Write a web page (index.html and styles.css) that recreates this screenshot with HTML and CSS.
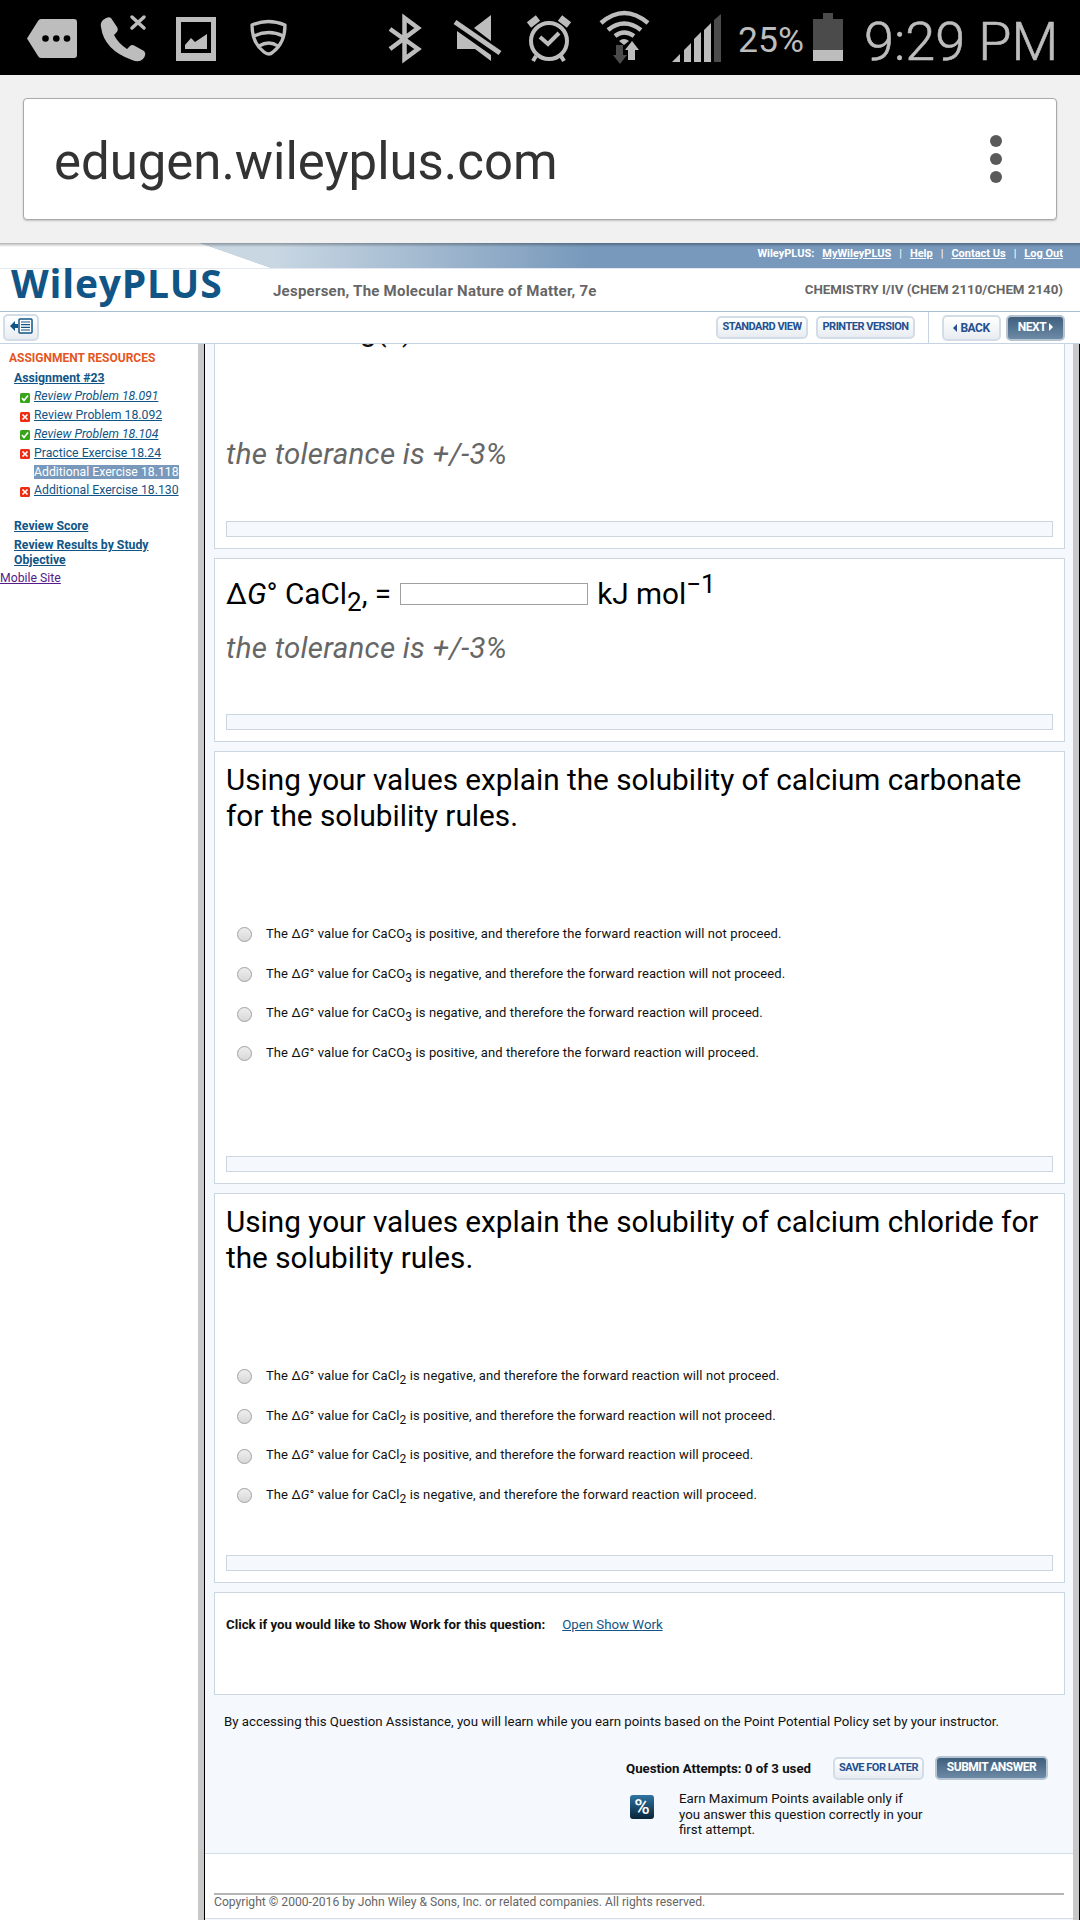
FILE: index.html
```html
<!DOCTYPE html>
<html lang="en">
<head>
    <meta charset="UTF-8">
    <meta name="viewport" content="width=device-width, initial-scale=1.0">
    <title>WileyPLUS</title>
    <link rel="stylesheet" href="styles.css">
</head>
<body>
    <div class="status-bar">
        <svg width="90" height="75" viewBox="0 0 90 75"><path d="M41 19H74q3 0 3 3V55q0 3-3 3H41q-2 0-3-2L27 38.500 38 21q1-2 3-2z"/><g fill="#000"><circle cx="45.500" cy="38.500" r="3.300"/><circle cx="56.300" cy="38.500" r="3.300"/><circle cx="67" cy="38.500" r="3.300"/></g></svg>
        <svg width="70" height="75" viewBox="90 0 70 75"><path d="M103 20q5-4 8-2l6 9q2 3-1 6l-2 2q4 8 13 14l3-3q2-2 5 0l9 5q3 3-1 8-4 4-11 1Q104 50 101 27q-1-4 2-7z"/><path class="line" d="M132 17l12 11M144 17l-12 11" stroke-width="3.500" stroke-linecap="round"/></svg>
        <svg width="72" height="75" viewBox="160 0 72 75"><path fill-rule="evenodd" d="M176 17h40v44h-40zM181 22v31h30v-31z"/><path d="M185 49v-4l6-7 4 4 12-8v15z"/></svg>
        <svg width="88" height="75" viewBox="232 0 88 75"><path class="line" stroke-width="3.300" stroke-linejoin="round" d="M252 25q16-7 33 0 0 18-12 27-4 4-9 0-12-9-12-27zM254 36q15-7 29 0M259 46q10-6 19 0"/></svg>
        <svg class="push" width="120" height="75" viewBox="320 0 120 75"><path class="line" stroke-width="4.500" d="M390 29l28 20-13.500 10V18L418 28 390 49"/></svg>
        <svg width="75" height="75" viewBox="440 0 75 75"><path d="M491 15v26l-17-13zM457 31l34 24v6l-16-12h-18z"/><path class="line" stroke-width="5" d="M455 22l45 31"/></svg>
        <svg width="75" height="75" viewBox="515 0 75 75"><circle class="line" stroke-width="4" cx="549" cy="41" r="18"/><path class="line" stroke-width="4" d="M540 37l8 7 11-11M536 56l-3 5M561 56l3 5"/><path class="line" stroke-width="7" d="M529 25l9-7M560 18l9 7"/></svg>
        <svg width="75" height="75" viewBox="590 0 75 75"><path class="line" stroke-width="4.500" d="M601 23q23-20 47 0M608 30q16-13 33 0M615 36q9-7 19 0"/><path d="M619 41q5-4 10 0l-5 4z"/><path class="dim" d="M616 45h7v10h4l-7 9-7-9h3z"/><path d="M628 60V50h-3l7-9 7 9h-4v10z"/></svg>
        <svg width="73" height="75" viewBox="665 0 73 75"><path d="M672 62l8-8v8zM684 62V50l7-7v19zM694 62V39l7-7v30zM704 62V30l7-7v39z"/><path class="dim" d="M714 62V20l7-6v48z"/></svg>
        <span class="battery-text">25%</span>
        <svg width="36" height="75" viewBox="810 0 36 75"><path class="dim" d="M823 13h10v6h10v31h-30V19h10z"/><path d="M813 50h30v11h-30z"/></svg>
        <span class="clock">9:29 PM</span>
    </div>

    <div class="browser-bar">
        <div class="url-box">
            <span class="url">edugen.wileyplus.com</span>
            <span class="menu-dots"><i></i><i></i><i></i></span>
        </div>
    </div>

    <header class="header">
        <div class="nav-strip">
            <nav class="top-nav">
                <span class="nav-label">WileyPLUS:</span>
                <a href="#">MyWileyPLUS</a><b>|</b><a href="#">Help</a><b>|</b><a href="#">Contact Us</a><b>|</b><a href="#">Log Out</a>
            </nav>
        </div>
        <div class="brand-row">
            <div class="logo">WileyPLUS</div>
            <div class="book-title">Jespersen, The Molecular Nature of Matter, 7e</div>
            <div class="course-title">CHEMISTRY I/IV (CHEM 2110/CHEM 2140)</div>
        </div>
    </header>

    <div class="toolbar">
        <button class="btn toggle">
            <svg width="23" height="16" viewBox="0 0 23 16"><path d="M0 8l5-5v3h3v4H5v3z" fill="#115586"/><rect x="9" y="1" width="13" height="14" rx="1" fill="#fff" stroke="#115586" stroke-width="1.500"/><path d="M11 4h9M11 6.700h9M11 9.300h9M11 12h9" stroke="#115586" stroke-width="1.200"/></svg>
        </button>
        <button class="btn standard">STANDARD VIEW</button>
        <button class="btn printer">PRINTER VERSION</button>
        <div class="page-buttons">
            <button class="btn back"><i class="arrow left"></i>BACK</button>
            <button class="btn dark next">NEXT<i class="arrow right"></i></button>
        </div>
    </div>

    <div class="main">
        <aside class="sidebar">
            <h2>ASSIGNMENT RESOURCES</h2>
            <a class="assignment" href="#">Assignment #23</a>
            <ul class="resources">
                <li><svg class="mark" viewBox="0 0 10 10"><rect width="10" height="10" rx="1.500" fill="#36a518"/><path d="M2 5l2 2.500 4-5" stroke="#fff" stroke-width="1.700" fill="none"/></svg><a class="done" href="#">Review Problem 18.091</a></li>
                <li><svg class="mark" viewBox="0 0 10 10"><rect width="10" height="10" rx="1.500" fill="#ee2c12"/><path d="M2.500 2.500l5 5M7.500 2.500l-5 5" stroke="#fff" stroke-width="1.700"/></svg><a href="#">Review Problem 18.092</a></li>
                <li><svg class="mark" viewBox="0 0 10 10"><rect width="10" height="10" rx="1.500" fill="#36a518"/><path d="M2 5l2 2.500 4-5" stroke="#fff" stroke-width="1.700" fill="none"/></svg><a class="done" href="#">Review Problem 18.104</a></li>
                <li><svg class="mark" viewBox="0 0 10 10"><rect width="10" height="10" rx="1.500" fill="#ee2c12"/><path d="M2.500 2.500l5 5M7.500 2.500l-5 5" stroke="#fff" stroke-width="1.700"/></svg><a href="#">Practice Exercise 18.24</a></li>
                <li><span class="mark"></span><span class="current">Additional Exercise 18.118</span></li>
                <li><svg class="mark" viewBox="0 0 10 10"><rect width="10" height="10" rx="1.500" fill="#ee2c12"/><path d="M2.500 2.500l5 5M7.500 2.500l-5 5" stroke="#fff" stroke-width="1.700"/></svg><a href="#">Additional Exercise 18.130</a></li>
            </ul>
            <a class="review" href="#">Review Score</a>
            <a class="review results" href="#">Review Results by Study<br>Objective</a>
            <a class="mobile" href="#">Mobile Site</a>
        </aside>

        <main class="content">
            <section class="panel first">
                <div class="cut-line">g(s)</div>
                <div class="tolerance">the tolerance is +/-3%</div>
                <div class="bar"></div>
            </section>

            <section class="panel answer">
                <div class="equation"><span>Δ<em>G</em>° CaCl<sub>2</sub>, =</span><input type="text"><span>kJ mol<sup>−1</sup></span></div>
                <div class="tolerance">the tolerance is +/-3%</div>
                <div class="bar"></div>
            </section>

            <section class="panel carbonate">
                <p class="question">Using your values explain the solubility of calcium carbonate<br>for the solubility rules.</p>
                <div class="options">
                    <label><i class="radio"></i><span>The Δ<em>G</em>° value for CaCO<sub>3</sub> is positive, and therefore the forward reaction will not proceed.</span></label>
                    <label><i class="radio"></i><span>The Δ<em>G</em>° value for CaCO<sub>3</sub> is negative, and therefore the forward reaction will not proceed.</span></label>
                    <label><i class="radio"></i><span>The Δ<em>G</em>° value for CaCO<sub>3</sub> is negative, and therefore the forward reaction will proceed.</span></label>
                    <label><i class="radio"></i><span>The Δ<em>G</em>° value for CaCO<sub>3</sub> is positive, and therefore the forward reaction will proceed.</span></label>
                </div>
                <div class="bar"></div>
            </section>

            <section class="panel chloride">
                <p class="question">Using your values explain the solubility of calcium chloride for<br>the solubility rules.</p>
                <div class="options">
                    <label><i class="radio"></i><span>The Δ<em>G</em>° value for CaCl<sub>2</sub> is negative, and therefore the forward reaction will not proceed.</span></label>
                    <label><i class="radio"></i><span>The Δ<em>G</em>° value for CaCl<sub>2</sub> is positive, and therefore the forward reaction will not proceed.</span></label>
                    <label><i class="radio"></i><span>The Δ<em>G</em>° value for CaCl<sub>2</sub> is positive, and therefore the forward reaction will proceed.</span></label>
                    <label><i class="radio"></i><span>The Δ<em>G</em>° value for CaCl<sub>2</sub> is negative, and therefore the forward reaction will proceed.</span></label>
                </div>
                <div class="bar"></div>
            </section>

            <section class="panel show-work">
                <strong>Click if you would like to Show Work for this question:</strong>
                <a href="#">Open Show Work</a>
            </section>

            <div class="policy">By accessing this Question Assistance, you will learn while you earn points based on the Point Potential Policy set by your instructor.</div>

            <div class="submit-row">
                <strong>Question Attempts: 0 of 3 used</strong>
                <button class="btn save">SAVE FOR LATER</button>
                <button class="btn dark submit">SUBMIT ANSWER</button>
            </div>

            <div class="points">
                <span class="percent">%</span>
                <p>Earn Maximum Points available only if<br>you answer this question correctly in your<br>first attempt.</p>
            </div>

            <footer class="footer">
                <div class="copyright">Copyright © 2000-2016 by John Wiley &amp; Sons, Inc. or related companies. All rights reserved.</div>
            </footer>
        </main>
    </div>
</body>
</html>
```

FILE: styles.css
```css
* {
    box-sizing: border-box;
}
body {
    margin: 0;
    width: 1080px;
    height: 1920px;
    overflow: hidden;
    background-color: white;
    font-family: Roboto, "Liberation Sans", sans-serif;
    font-size: 13.250px;
    color: #111;
    white-space: nowrap;
}
a {
    color: #115586;
}
.status-bar {
    display: flex;
    height: 75px;
    background-color: black;
    color: #bdbdbd;
}
.status-bar svg {
    flex: none;
    fill: #bdbdbd;
}
.status-bar .line {
    fill: none;
    stroke: #bdbdbd;
}
.status-bar .dim {
    fill: #4b4b4b;
}
.battery-text {
    width: 72px;
    line-height: 81px;
    font-size: 35.500px;
}
.clock {
    padding-left: 18px;
    line-height: 83px;
    font-size: 54px;
    font-weight: 300;
    -webkit-text-stroke: 0.600px #bdbdbd;
}
.browser-bar {
    height: 168px;
    padding: 23px;
    background-color: #f1f1f1;
}
.url-box {
    display: flex;
    justify-content: space-between;
    align-items: center;
    height: 122px;
    padding: 0 54px 0 30px;
    background-color: white;
    border: 1px solid #aaa;
    border-radius: 4px;
    box-shadow: 0 1px 2px rgba(0,0,0,0.2);
}
.url {
    padding-top: 5px;
    font-size: 50.900px;
    color: #333;
}
.menu-dots {
    display: flex;
    flex-direction: column;
    gap: 6px;
}
.menu-dots i {
    width: 12px;
    height: 12px;
    border-radius: 50%;
    background-color: #5a5a5a;
}
.header {
    height: 69px;
    border-bottom: 1px solid #a9bfd3;
}
.nav-strip {
    height: 26px;
    background: linear-gradient(rgba(0,0,0,0.3), rgba(0,0,0,0) 4px),
        linear-gradient(to bottom left, transparent 50%, white 51%) 200px 0 / 74px 26px no-repeat,
        linear-gradient(white, white) 0 0 / 200px 26px no-repeat,
        linear-gradient(90deg, #c9d7e3 273px, #7899bb 590px);
    border-bottom: 1px solid #e3e9ef;
}
.top-nav {
    display: flex;
    justify-content: flex-end;
    padding: 3px 17px 0 0;
    line-height: 16px;
    font-size: 11px;
    font-weight: bold;
    color: white;
}
.top-nav a {
    color: white;
}
.top-nav b {
    padding: 0 8px;
    font-weight: normal;
}
.nav-label {
    margin-right: 8px;
}
.brand-row {
    display: flex;
    font-weight: bold;
    color: #666;
}
.logo {
    width: 273px;
    height: 40px;
    padding-left: 11px;
    line-height: 28px;
    font-family: "Open Sans", sans-serif;
    font-size: 39px;
    letter-spacing: 0.800px;
    color: #115586;
}
.book-title {
    line-height: 44px;
    font-size: 15px;
    letter-spacing: 0.240px;
}
.course-title {
    margin-left: auto;
    padding-right: 17px;
    line-height: 42px;
    font-size: 13.300px;
}
.toolbar {
    display: flex;
    align-items: center;
    height: 32px;
    border-bottom: 1px solid #c6d3e2;
}
.btn {
    height: 23px;
    padding: 0 0 2px;
    border: 2px solid #d3dde8;
    border-radius: 5px;
    background: linear-gradient(white, #e8ecf1);
    font-family: Roboto, sans-serif;
    font-size: 11px;
    font-weight: bold;
    letter-spacing: -0.500px;
    line-height: 17px;
    color: #24508f;
    white-space: nowrap;
}
.btn.dark {
    border-color: #b7c5d3;
    background: linear-gradient(#3f5f7d, #6d8aa6);
    color: white;
}
.toggle {
    width: 36px;
    height: 27px;
    margin-left: 3px;
    padding-top: 2px;
}
.standard {
    width: 92px;
    margin-left: 677px;
}
.printer {
    width: 99px;
    margin-left: 8px;
}
.page-buttons {
    display: flex;
    gap: 5px;
    height: 31px;
    margin-left: 13px;
    padding: 3px 0 0 13px;
    border-left: 1px solid #c6d3e2;
}
.page-buttons .btn {
    width: 59px;
    height: 26px;
    padding: 0;
    font-size: 12px;
}
.page-buttons .next {
    padding-bottom: 2px;
}
.arrow {
    display: inline-block;
    border: 4px solid transparent;
}
.arrow.left {
    margin-right: 3px;
    border-left: 0;
    border-right-color: #24508f;
}
.arrow.right {
    margin-left: 3px;
    border-right: 0;
    border-left-color: white;
}
.main {
    display: flex;
    height: 1576px;
    border-right: 1px solid black;
}
.sidebar {
    width: 198px;
    padding-top: 6px;
    font-size: 12.250px;
}
.sidebar h2 {
    margin: 0 0 4px 9px;
    font-size: 12px;
    line-height: 16px;
    color: #e4561f;
}
.assignment {
    display: block;
    margin-left: 14px;
    line-height: 17px;
    font-weight: bold;
}
.resources {
    margin: 0;
    padding: 0 0 0 20px;
    list-style: none;
}
.resources li {
    display: flex;
    align-items: center;
    height: 18.800px;
}
.mark {
    width: 10px;
    height: 10px;
    margin: 3px 4px 0 0;
}
.done {
    font-style: italic;
}
.current {
    line-height: 14px;
    background-color: #7899bb;
    color: white;
}
.review {
    display: block;
    margin: 19px 0 0 14px;
    line-height: 14.400px;
    font-weight: bold;
}
.results {
    margin-top: 5px;
}
.mobile {
    display: block;
    margin-top: 4px;
    line-height: 14.400px;
    color: #551a8b;
}
.content {
    display: flex;
    flex-direction: column;
    width: 881px;
    background-color: #f5f8fc;
    border: solid #c8c8c8;
    border-width: 0 6px;
    box-shadow: inset 1px 0 black;
}
.panel {
    flex: none;
    display: flex;
    flex-direction: column;
    width: 851px;
    margin: 0 0 9px 10px;
    padding: 10px 11px 11px;
    background-color: white;
    border: 1px solid #ccd6e1;
}
.bar {
    height: 16px;
    margin-top: auto;
    background-color: #f5f8fc;
    border: 1px solid #ccd6e1;
}
/* scrolled under the toolbar */
.first {
    height: 205px;
    padding-top: 0;
    border-top: 0;
    overflow: hidden;
}
.cut-line {
    height: 36px;
    margin-top: -31px;
    padding-left: 134px;
    line-height: 36px;
    font-size: 29.500px;
}
.cut-line + .tolerance {
    margin-top: 87px;
}
.tolerance {
    line-height: 36px;
    font-size: 29.500px;
    font-style: italic;
    letter-spacing: 0.280px;
    color: #666;
}
.answer {
    height: 184px;
}
.equation {
    display: flex;
    align-items: center;
    gap: 9px;
    height: 53px;
    margin-bottom: 8px;
    padding-bottom: 4px;
    font-size: 29.700px;
    color: black;
}
.equation sub,
.equation sup {
    font-size: 26px;
    line-height: 0;
}
.equation input {
    width: 188px;
    height: 22px;
    border: 1px solid #a0a0a0;
}
.carbonate {
    height: 433px;
}
.chloride {
    height: 390px;
}
.question {
    margin: 0 0 81px;
    font-size: 29.720px;
    line-height: 36px;
    color: black;
}
.options label {
    display: flex;
    align-items: center;
    gap: 14px;
    height: 39.700px;
    padding-left: 11px;
}
.options span {
    padding-bottom: 3px;
    font-size: 13px;
    letter-spacing: 0.100px;
}
.options sub {
    font-size: 12px;
    line-height: 0;
}
.radio {
    width: 15px;
    height: 15px;
    border: 1px solid #a0a0a0;
    border-radius: 50%;
    background: linear-gradient(#eee, #d8d8d8);
}
.show-work {
    flex-direction: row;
    gap: 17px;
    height: 103px;
    margin-bottom: 0;
    padding-top: 24px;
    line-height: 16px;
}
.policy {
    margin: 19px 0 0 20px;
    line-height: 16px;
}
.submit-row {
    display: flex;
    align-items: center;
    height: 24px;
    margin: 26px 0 0 422px;
}
.save {
    width: 91px;
    margin-left: auto;
}
.submit {
    width: 113px;
    height: 24px;
    margin: 0 25px 0 11px;
    font-size: 12px;
}
.points {
    display: flex;
    margin: 11px 0 0 426px;
}
.points p {
    margin: 0 0 0 25px;
    line-height: 15.600px;
}
.percent {
    width: 24px;
    height: 24px;
    margin-top: 4px;
    border-radius: 3px;
    background: linear-gradient(#2f74a3, #0a2338);
    color: white;
    font-size: 21px;
    font-weight: 500;
    line-height: 24px;
    text-align: center;
}
.footer {
    height: 66px;
    margin: auto 0 1px 1px;
    padding: 39px 9px 0;
    background-color: white;
    border-top: 1px solid #d3dde8;
    border-bottom: 1px solid #d3dde8;
}
.copyright {
    border-top: 2px solid #b5b5b5;
    line-height: 14px;
    font-size: 12.130px;
    color: #666;
}
```
